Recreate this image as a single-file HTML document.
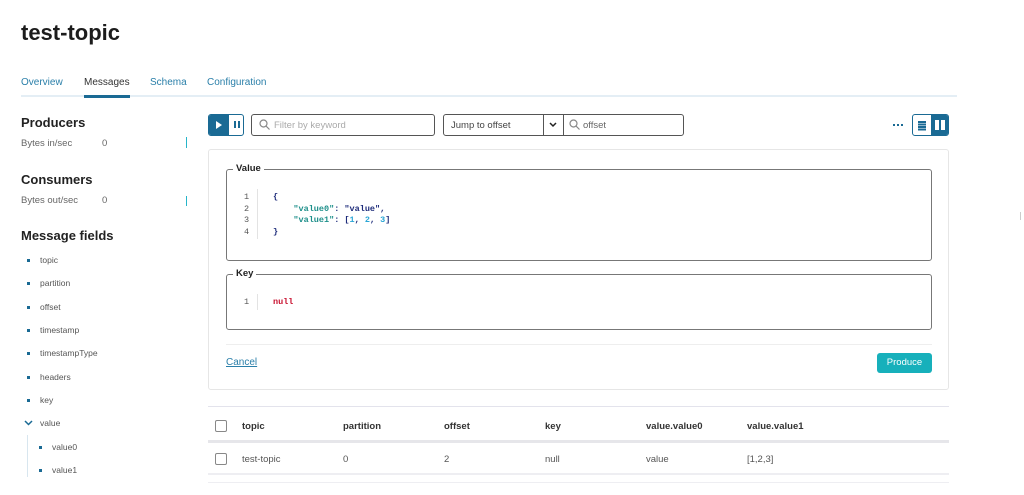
<!DOCTYPE html>
<html><head><meta charset="utf-8"><style>
*{box-sizing:border-box;margin:0;padding:0}
body{width:1024px;height:495px;background:#fff;font-family:"Liberation Sans",sans-serif;color:#222;position:relative;overflow:hidden}
.a{position:absolute;white-space:nowrap}
.tab{font-size:10px;color:#2a7fa9;top:77px}
.h{font-size:13px;font-weight:bold;color:#222}
.s{font-size:9.5px;color:#666}
.f{font-size:8.5px;color:#555}
.dot{position:absolute;width:3px;height:3px;background:#1a6a94}
.mono{font-family:"Liberation Mono",monospace;font-size:8.5px}
.box{position:absolute;border:1px solid #777;border-radius:3px}
.lg{position:absolute;background:#fff;font-size:9.5px;font-weight:bold;padding:0 3px;color:#222}
.th{font-size:9.5px;font-weight:bold;color:#333;top:421px}
.td{font-size:9.5px;color:#555;top:454px}
.cb{position:absolute;width:12px;height:12px;border:1px solid #888;border-radius:2px;left:215px}
</style></head><body>
<div class="a" style="left:21px;top:20px;font-size:22px;font-weight:bold;color:#1c1c1c">test-topic</div>
<div class="a tab" style="left:21px">Overview</div>
<div class="a tab" style="left:84px;color:#333">Messages</div>
<div class="a tab" style="left:150px">Schema</div>
<div class="a tab" style="left:207px">Configuration</div>
<div class="a" style="left:21px;top:95px;width:936px;height:2px;background:#e4eef5"></div>
<div class="a" style="left:84px;top:95px;width:46px;height:3px;background:#1a6a94"></div>

<div class="a h" style="left:21px;top:115px">Producers</div>
<div class="a s" style="left:21px;top:138px">Bytes in/sec</div>
<div class="a s" style="left:102px;top:138px">0</div>
<div class="a" style="left:186px;top:137px;width:1px;height:11px;background:#27b5c9"></div>
<div class="a h" style="left:21px;top:172px">Consumers</div>
<div class="a s" style="left:21px;top:195px">Bytes out/sec</div>
<div class="a s" style="left:102px;top:195px">0</div>
<div class="a" style="left:186px;top:196px;width:1px;height:10px;background:#27b5c9"></div>
<div class="a h" style="left:21px;top:228px">Message fields</div>

<div class="dot" style="left:27px;top:259px"></div><div class="a f" style="left:40px;top:255px">topic</div>
<div class="dot" style="left:27px;top:282px"></div><div class="a f" style="left:40px;top:278px">partition</div>
<div class="dot" style="left:27px;top:306px"></div><div class="a f" style="left:40px;top:302px">offset</div>
<div class="dot" style="left:27px;top:329px"></div><div class="a f" style="left:40px;top:325px">timestamp</div>
<div class="dot" style="left:27px;top:352px"></div><div class="a f" style="left:40px;top:348px">timestampType</div>
<div class="dot" style="left:27px;top:376px"></div><div class="a f" style="left:40px;top:372px">headers</div>
<div class="dot" style="left:27px;top:399px"></div><div class="a f" style="left:40px;top:395px">key</div>
<svg class="a" style="left:24px;top:420px" width="9" height="6"><path d="M1 1L4.5 4.5L8 1" stroke="#1a6a94" stroke-width="1.5" fill="none"/></svg>
<div class="a f" style="left:40px;top:418px">value</div>
<div class="a" style="left:27px;top:435px;width:1px;height:42px;background:#d8e6ef"></div>
<div class="dot" style="left:39px;top:446px"></div><div class="a f" style="left:52px;top:442px">value0</div>
<div class="dot" style="left:39px;top:469px"></div><div class="a f" style="left:52px;top:465px">value1</div>

<!-- toolbar -->
<div class="a" style="left:208px;top:114px;width:36px;height:22px;border:1px solid #1a6a94;border-radius:3px;overflow:hidden">
<div style="position:absolute;left:0;top:0;width:20px;height:20px;background:#1a6a94"></div>
<svg style="position:absolute;left:7px;top:6px" width="7" height="8"><path d="M0 0L6 4L0 8Z" fill="#fff"/></svg>
<div style="position:absolute;left:25px;top:6px;width:2px;height:7px;background:#1a6a94"></div>
<div style="position:absolute;left:29px;top:6px;width:2px;height:7px;background:#1a6a94"></div>
</div>
<div class="a" style="left:251px;top:114px;width:184px;height:22px;border:1px solid #555;border-radius:3px"></div>
<svg class="a" style="left:259px;top:119px" width="11" height="11"><circle cx="4.5" cy="4.5" r="3.5" stroke="#888" fill="none" stroke-width="1.2"/><path d="M7 7L10.5 10.5" stroke="#888" stroke-width="1.2"/></svg>
<div class="a" style="left:274px;top:120px;font-size:9.5px;color:#aaa">Filter by keyword</div>
<div class="a" style="left:443px;top:114px;width:241px;height:22px;border:1px solid #555;border-radius:3px"></div>
<div class="a" style="left:543px;top:114px;width:1px;height:22px;background:#555"></div>
<div class="a" style="left:563px;top:114px;width:1px;height:22px;background:#555"></div>
<div class="a" style="left:451px;top:120px;font-size:9.5px;color:#444">Jump to offset</div>
<svg class="a" style="left:549px;top:122px" width="8" height="6"><path d="M1 1L4 4L7 1" stroke="#222" stroke-width="1.5" fill="none"/></svg>
<svg class="a" style="left:569px;top:119px" width="11" height="11"><circle cx="4.5" cy="4.5" r="3.5" stroke="#888" fill="none" stroke-width="1.2"/><path d="M7 7L10.5 10.5" stroke="#888" stroke-width="1.2"/></svg>
<div class="a" style="left:583px;top:120px;font-size:9.5px;color:#666">offset</div>
<div class="a" style="left:893px;top:124px;width:2px;height:2px;background:#1a6a94;box-shadow:4px 0 0 #1a6a94,8px 0 0 #1a6a94"></div>
<div class="a" style="left:912px;top:114px;width:37px;height:22px;border:1px solid #1a6a94;border-radius:3px;overflow:hidden">
<div style="position:absolute;left:5px;top:6px;width:8px;height:1.5px;background:#1a6a94;box-shadow:0 2.5px 0 #1a6a94,0 5px 0 #1a6a94,0 7.5px 0 #1a6a94"></div>
<div style="position:absolute;left:18px;top:0;width:18px;height:20px;background:#1a6a94"></div>
<div style="position:absolute;left:22px;top:5px;width:4px;height:10px;background:#fff"></div>
<div style="position:absolute;left:28px;top:5px;width:4px;height:10px;background:#fff"></div>
</div>

<!-- panel -->
<div class="a" style="left:208px;top:149px;width:741px;height:241px;border:1px solid #e6e6e6;border-radius:3px"></div>
<div class="box" style="left:226px;top:169px;width:706px;height:92px"></div>
<div class="lg" style="left:233px;top:163px">Value</div>
<div class="a mono" style="left:244px;top:192px;color:#555;line-height:11.5px">1<br>2<br>3<br>4</div>
<div class="a" style="left:257px;top:189px;width:1px;height:50px;background:#e3e3e3"></div>
<div class="a mono" style="left:273px;top:192px;line-height:11.5px;color:#1d2b7a;white-space:pre;font-weight:bold">{
    <span style="color:#1d8f8a">"value0"</span>: "value",
    <span style="color:#1d8f8a">"value1"</span>: [<span style="color:#2aa6d6">1</span>, <span style="color:#2aa6d6">2</span>, <span style="color:#2aa6d6">3</span>]
}</div>
<div class="box" style="left:226px;top:274px;width:706px;height:56px"></div>
<div class="lg" style="left:233px;top:268px">Key</div>
<div class="a mono" style="left:244px;top:297px;color:#555">1</div>
<div class="a" style="left:257px;top:294px;width:1px;height:16px;background:#e3e3e3"></div>
<div class="a mono" style="left:273px;top:297px;color:#c8102e;font-weight:bold">null</div>
<div class="a" style="left:226px;top:344px;width:706px;height:1px;background:#eee"></div>
<div class="a" style="left:226px;top:357px;font-size:10px;color:#2a7fa9;text-decoration:underline">Cancel</div>
<div class="a" style="left:877px;top:353px;width:55px;height:20px;background:#17b0bb;border-radius:3px;color:#fff;font-size:9.5px;text-align:center;line-height:20px;padding-top:0">Produce</div>

<!-- table -->
<div class="a" style="left:208px;top:406px;width:741px;height:1px;background:#e3e3ec"></div>
<div class="cb" style="top:420px"></div>
<div class="a th" style="left:242px">topic</div>
<div class="a th" style="left:343px">partition</div>
<div class="a th" style="left:444px">offset</div>
<div class="a th" style="left:545px">key</div>
<div class="a th" style="left:646px">value.value0</div>
<div class="a th" style="left:747px">value.value1</div>
<div class="a" style="left:208px;top:440px;width:741px;height:3px;background:#e6e6ea"></div>
<div class="cb" style="top:453px"></div>
<div class="a td" style="left:242px">test-topic</div>
<div class="a td" style="left:343px">0</div>
<div class="a td" style="left:444px">2</div>
<div class="a td" style="left:545px">null</div>
<div class="a td" style="left:646px">value</div>
<div class="a td" style="left:747px">[1,2,3]</div>
<div class="a" style="left:208px;top:473px;width:741px;height:2px;background:#eeeef2"></div>
<div class="a" style="left:208px;top:482px;width:741px;height:1px;background:#eeeef2"></div>
<div class="a" style="left:1020px;top:212px;width:1px;height:8px;background:#ccc"></div>
</body></html>
